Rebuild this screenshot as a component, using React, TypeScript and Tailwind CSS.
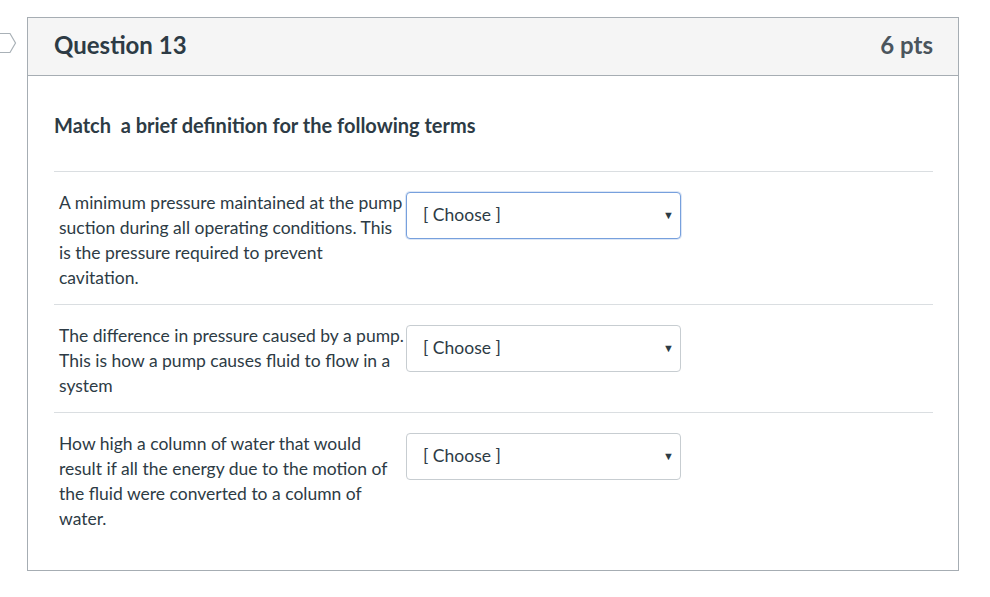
// Quiz question — matching terms to definitions

const ROWS = [
  {
    text: 'A minimum pressure maintained at the pump suction during all operating conditions. This is the pressure required to prevent cavitation.',
    focused: true,
  },
  {
    text: 'The difference in pressure caused by a pump. This is how a pump causes fluid to flow in a system',
    focused: false,
  },
  {
    text: 'How high a column of water that would result if all the energy due to the motion of the fluid were converted to a column of water.',
    focused: false,
  },
];

function ChooseSelect({ focused }: { focused: boolean }) {
  return (
    <div
      className={
        'w-[275px] h-[47px] mt-[2px] shrink-0 flex items-center justify-between pl-[16px] pr-[6px] rounded-[4px] bg-white text-[17.5px] text-[#2d3b45] ' +
        (focused ? 'border border-[#77a0dd] shadow-[0_0_0_1px_rgba(119,160,221,0.25)]' : 'border border-[#c7cdd1]')
      }
    >
      <span>[ Choose ]</span>
      <span className="text-[11px] text-[#2d3b45]">▼</span>
    </div>
  );
}

export default function App() {
  return (
    <div className="relative min-h-screen bg-white font-['Lato','Liberation_Sans',sans-serif] text-[#2d3b45]">
      {/* question flag marker */}
      <svg className="absolute left-0 top-[31px]" width="20" height="24" viewBox="0 0 20 24">
        <path d="M-6 2.5 H10 L15.5 12 L10 21.5 H-6 Z" fill="white" stroke="#a9b1b7" strokeWidth="1.2" />
      </svg>

      <div className="pt-[17px] pl-[27px]">
        <div className="w-[932px] h-[554px] border border-[#a6adb3] flex flex-col">
          <div className="h-[58px] bg-[#f5f5f5] border-b border-[#a6adb3] flex items-center justify-between pl-[26px] pr-[25px] pb-[3px]">
            <h2 className="text-[24px] font-bold">Question 13</h2>
            <span className="text-[24px] font-bold text-[#4b555d]">6 pts</span>
          </div>

          <div className="pl-[26px] pr-[25px] pt-[36px]">
            <p className="text-[20px] font-bold leading-[26px] whitespace-pre pb-[33px] border-b border-[#dadee1]">
              {'Match  a brief definition for the following terms'}
            </p>

            {ROWS.map((row, i) => (
              <div
                key={i}
                className={
                  'flex items-start pt-[18px] pb-[14px] ' + (i < ROWS.length - 1 ? 'border-b border-[#dadee1]' : '')
                }
              >
                <p className="w-[352px] shrink-0 pl-[5px] pr-[2px] text-[17.5px] leading-[25px]">{row.text}</p>
                <ChooseSelect focused={row.focused} />
              </div>
            ))}
          </div>
        </div>
      </div>
    </div>
  );
}
